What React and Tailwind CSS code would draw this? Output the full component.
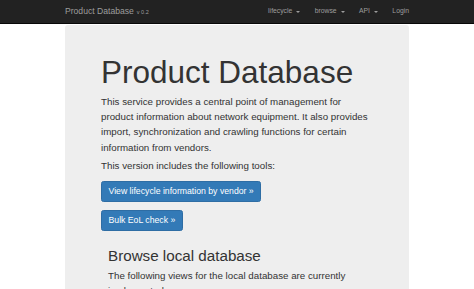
const navItems = [
  { label: 'lifecycle', caret: true },
  { label: 'browse', caret: true },
  { label: 'API', caret: true },
  { label: 'Login', caret: false },
]

const Caret = () => (
  <span className="ml-[2px] inline-block h-0 w-0 border-x-[2px] border-t-[2px] border-x-transparent border-t-[#9d9d9d] align-middle" />
)

export default function App() {
  return (
    <div
      className="min-h-[289px] bg-white text-[#333]"
      style={{ fontFamily: '"Liberation Sans", Arial, sans-serif' }}
    >
      {/* Navbar */}
      <nav className="h-[24px] border-b border-[#080808] bg-[#222]">
        <div className="mx-auto flex h-full w-[344px] items-center justify-between">
          <a className="flex items-baseline text-[8.6px] text-[#9d9d9d]">
            Product Database
            <span className="ml-[3px] text-[5.5px]">v 0.2</span>
          </a>
          <ul className="flex items-center gap-[14.4px] text-[6.8px] text-[#9d9d9d]">
            {navItems.map((item) => (
              <li key={item.label} className="flex items-center">
                {item.label}
                {item.caret && (
                  <span className="ml-[2px] flex items-center">
                    <Caret />
                  </span>
                )}
              </li>
            ))}
          </ul>
        </div>
      </nav>

      {/* Jumbotron */}
      <div className="mx-auto mt-[1px] w-[344px] rounded-t-[3px] bg-[#eee] px-[36px] pt-[32px] pb-[20px]">
        <h1 className="text-[31.5px] leading-[31.5px]">Product Database</h1>
        <p className="mt-[5px] text-[9.75px] leading-[15.4px]">
          This service provides a central point of management for product
          information about network equipment. It also provides import,
          synchronization and crawling functions for certain information from
          vendors.
        </p>
        <p className="mt-[3px] text-[9.75px] leading-[15.4px]">
          This version includes the following tools:
        </p>
        <div className="mt-[7px] flex flex-col items-start gap-[8px]">
          <a className="flex h-[21px] items-center rounded-[2.5px] border border-[#2e6da4] bg-[#337ab7] px-[6.5px] text-[8.7px] text-white">
            View lifecycle information by vendor »
          </a>
          <a className="flex h-[21px] items-center rounded-[2.5px] border border-[#2e6da4] bg-[#337ab7] px-[6.5px] text-[8.7px] text-white">
            Bulk EoL check »
          </a>
        </div>

        <div className="pl-[7px]">
          <h2 className="mt-[17px] text-[15.2px] leading-[16.7px]">
            Browse local database
          </h2>
          <p className="mt-[3.5px] text-[9.75px] leading-[15px]">
            The following views for the local database are currently
            implemented:
          </p>
        </div>
      </div>
    </div>
  )
}
